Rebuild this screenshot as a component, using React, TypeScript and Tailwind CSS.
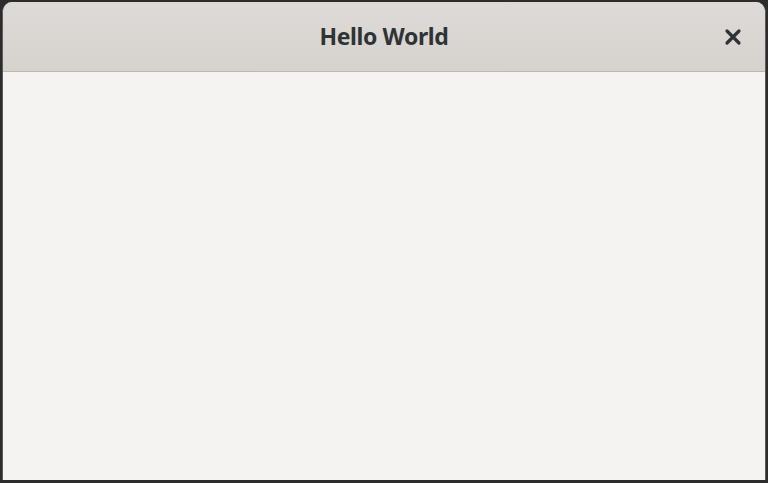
import React from 'react';

const CloseIcon: React.FC = () => (
  <svg width="18" height="18" viewBox="0 0 18 18" aria-hidden="true">
    <path d="M3 3 L15 15 M15 3 L3 15" stroke="#2e3436" strokeWidth="3.2" strokeLinecap="round" />
  </svg>
);

export default function App() {
  return (
    <div className="w-[768px] h-[483px] bg-[#2c2c2c] pt-[2px] px-[2px] pb-[3px] flex" style={{ fontFamily: '"Noto Sans", "Open Sans", sans-serif' }}>
      <div className="flex-1 flex flex-col rounded-t-[10px] overflow-hidden bg-[#f4f3f1] border-x border-[#5a5a5a]">
        {/* Header bar */}
        <div className="h-[70px] shrink-0 bg-gradient-to-b from-[#dedad7] to-[#d6d2ce] border-b border-[#c3b6ae] flex items-center relative">
          <div className="flex-1 text-center text-[23px] font-bold text-[#2e3436] tracking-[-0.4px]">Hello World</div>
          <button className="absolute right-[22px] top-[25px] w-[20px] h-[20px] flex items-center justify-center">
            <CloseIcon />
          </button>
        </div>
        {/* Content */}
        <div className="flex-1 bg-[#f4f3f1]" />
      </div>
    </div>
  );
}
